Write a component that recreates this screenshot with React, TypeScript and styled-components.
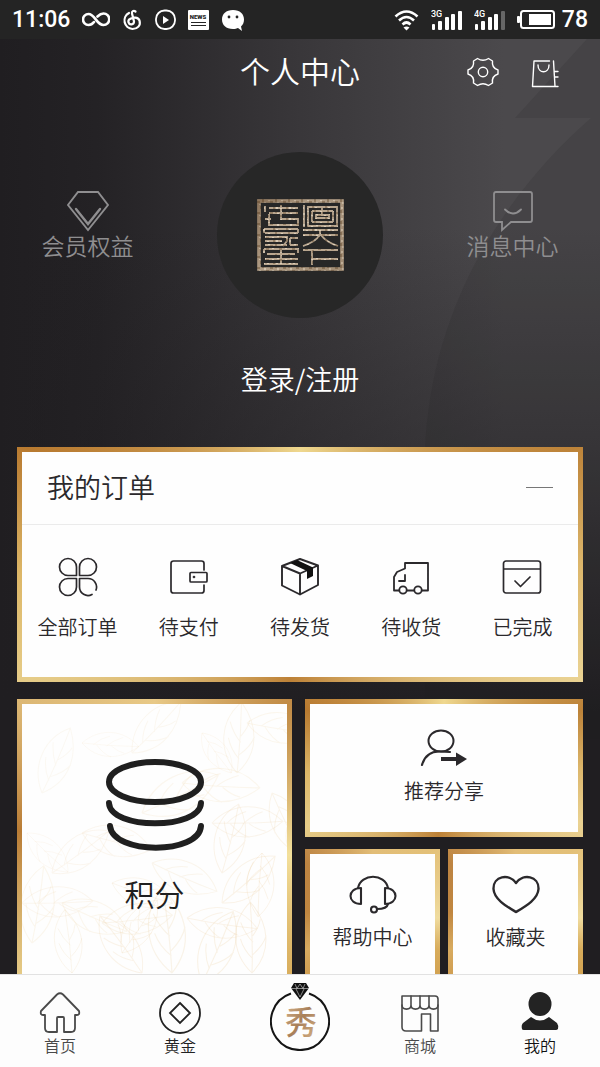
import React from "react";
import styled, { createGlobalStyle } from "styled-components";

const ink = "#2b292c";
const cjk = `"Noto Sans CJK SC", "Noto Sans", sans-serif`;

const GlobalStyle = createGlobalStyle`
  *, *::before, *::after { box-sizing: border-box; }
  body { margin: 0; background: #201e21; font-family: ${cjk}; font-weight: 350; }
  svg { display: block; flex: none; }
  button { font: inherit; color: inherit; background: none; border: 0; padding: 0; margin: 0; cursor: pointer; }
  a { color: inherit; text-decoration: none; }
`;

const Screen = styled.div`
  display: flex;
  flex-direction: column;
  height: 100vh;
`;

const StatusBar = styled.div`
  display: flex;
  align-items: center;
  flex: none;
  height: 39px;
  padding: 0 12px;
  background: #242424;
  color: #fff;
  font: 500 23px/36px Roboto, sans-serif;
`;

const StatusGroup = styled.div<{ $gap: number; $push?: boolean }>`
  display: flex;
  align-items: center;
  gap: ${(p) => p.$gap}px;
  margin-left: ${(p) => (p.$push ? "auto" : "0")};
`;

const Content = styled.main`
  position: relative;
  flex: 1;
  min-height: 0;
  overflow-y: auto;
  scrollbar-width: none;
  background:
    linear-gradient(180deg, rgba(32, 30, 33, 0) 20%, rgba(32, 30, 33, 0.4) 44%, #201e21 72%),
    linear-gradient(90deg, #201e21 0%, #242225 16%, #39373a 50%, #4b494c 84%, #4b494c 100%);
`;

const Backdrop = styled.svg`
  position: absolute;
  top: 0;
  right: 0;
`;

const Page = styled.div`
  position: relative;
`;

const Header = styled.header`
  display: grid;
  grid-template-columns: 1fr auto 1fr;
  align-items: center;
  height: 66px;
  padding: 0 41px;
  color: #fff;
`;

const Title = styled.h1`
  grid-column: 2;
  margin: 0;
  padding-bottom: 4px;
  font-size: 30px;
  line-height: 44px;
  font-weight: 350;
`;

const Actions = styled.div`
  display: flex;
  justify-content: flex-end;
  align-items: center;
  gap: 32px;
`;

const Hero = styled.section`
  display: grid;
  grid-template-columns: 7fr 10fr 7fr;
  align-items: center;
  justify-items: center;
  padding-top: 47px;
`;

const SideLink = styled.a`
  display: flex;
  flex-direction: column;
  align-items: center;
  padding-bottom: 22px;
  color: #8f8e90;
  font-size: 23px;
  line-height: 26px;
`;

const Avatar = styled.button`
  display: flex;
  align-items: center;
  justify-content: center;
  width: 166px;
  height: 166px;
  border-radius: 50%;
  background: #272727;
`;

const Login = styled.a`
  display: block;
  width: max-content;
  margin: 41px auto 48px;
  color: #fff;
  font-size: 27px;
  line-height: 40px;
`;

const Sections = styled.div`
  display: grid;
  gap: 17px;
  padding: 0 17px 16px;
  color: ${ink};
`;

const frames = {
  wide: "#efd88f 0deg, #bd8339 67deg, #dcb66b 90deg, #ead292 112deg, #bd8137 185deg, #e6cc88 247deg, #ddb768 268deg, #b87a30 293deg, #efd88f 360deg",
  tall: "#e8c987 0deg, #c18b46 44deg, #f3e09c 95deg, #d8ac5b 136deg, #bd8137 180deg, #e6cc88 224deg, #b97c35 275deg, #dcb774 316deg, #e8c987 360deg",
  small: "#e2bd77 0deg, #e3c078 40deg, #f0dc9f 90deg, #d8ac5b 116deg, #bd7f30 190deg, #d8ab60 244deg, #c08640 275deg, #bd8442 310deg, #e2bd77 360deg",
};

const Card = styled.section<{ $frame: keyof typeof frames }>`
  border: 5px solid #d6ab60;
  border-image: conic-gradient(${(p) => frames[p.$frame]}) 5;
  background: #fefefe;
`;

const OrderHead = styled.div`
  display: flex;
  align-items: center;
  justify-content: space-between;
  height: 73px;
  padding: 0 25px 2px;
  border-bottom: 1px solid #ebebeb;
`;

const OrderTitle = styled.h2`
  margin: 0;
  font-size: 27px;
  line-height: 40px;
  font-weight: 350;
`;

const Dash = styled.button`
  display: flex;
  align-items: center;
  width: 27px;
  height: 32px;

  &::before {
    content: "";
    width: 100%;
    height: 1px;
    background: #777;
  }
`;

const OrderList = styled.div`
  display: grid;
  grid-template-columns: repeat(5, 1fr);
  padding: 32px 0 35px;
`;

const OrderLink = styled.a`
  display: flex;
  flex-direction: column;
  align-items: center;
  gap: 15px;
  font-size: 20px;
  line-height: 30px;
`;

const Tiles = styled.div`
  display: grid;
  grid-template-columns: 275fr 278fr;
  gap: 13px;
`;

const TileColumn = styled.div`
  display: grid;
  gap: 12px;
`;

const TilePair = styled.div`
  display: grid;
  grid-template-columns: 1fr 1fr;
  gap: 8px;
`;

const TileLink = styled.a`
  display: flex;
  flex-direction: column;
  align-items: center;
  gap: 8px;
  padding: 24px 0 26px;
  font-size: 20px;
  line-height: 30px;
`;

const SmallTileLink = styled(TileLink)`
  padding: 20px 0 30px;
`;

const PointsLink = styled.a`
  position: relative;
  display: flex;
  flex-direction: column;
  align-items: center;
  gap: 19px;
  height: 100%;
  padding-top: 54px;
  overflow: hidden;
  color: #1f1f1f;
  font-size: 30px;
  line-height: 44px;

  > * { position: relative; }
`;

const Leaves = styled.svg`
  && {
    position: absolute;
    inset: 0;
    width: 100%;
    height: 100%;
  }
`;

const TabBar = styled.nav`
  display: grid;
  grid-template-columns: repeat(5, 1fr);
  flex: none;
  padding: 8px 0 11px;
  border-top: 1px solid #e2e2e2;
  background: #fdfdfd;
`;

const Tab = styled.a<{ $tone: string }>`
  display: flex;
  flex-direction: column;
  align-items: center;
  padding-top: 9px;
  color: ${(p) => p.$tone};
  font-size: 16px;
  line-height: 22px;
`;

const ShowTab = styled.a`
  display: flex;
  justify-content: center;
  height: 68px;
`;

type IconProps = {
  w: number;
  h: number;
  sw?: number;
  children: React.ReactNode;
};

const Icon = ({ w, h, sw = 2, children }: IconProps) => (
  <svg
    width={w}
    height={h}
    viewBox={`0 0 ${w} ${h}`}
    fill="none"
    stroke="currentColor"
    strokeWidth={sw}
    strokeLinecap="round"
    strokeLinejoin="round"
    aria-hidden="true"
  >
    {children}
  </svg>
);

const Signal = ({ label, weak }: { label: string; weak?: boolean }) => (
  <svg width="31" height="22" viewBox="0 0 31 22" fill="#fff" aria-hidden="true">
    <text x="0" y="8" fontSize="9" fontFamily="Roboto, sans-serif" fontWeight="500">{label}</text>
    <rect x="1" y="15" width="3" height="6" rx="1" />
    <rect x="7" y="12" width="4" height="9" rx="1" />
    <rect x="14" y="8" width="4" height="13" rx="1" />
    <rect x="20" y="5" width="4" height="16" rx="1" />
    <rect x="27" y="2" width="4" height="19" rx="1" opacity={weak ? 0.3 : 1} />
  </svg>
);

const Seal = () => (
  <svg width="87" height="72" viewBox="0 0 87 72" fill="none" stroke="url(#foil)" strokeWidth="1.8" role="img" aria-label="阖天下传家宝">
    <defs>
      <pattern id="foil" width="13" height="11" patternUnits="userSpaceOnUse">
        <rect width="13" height="11" fill="#b9a68f" />
        <path d="M0 2h3v2H0zM5 0h2v3H5zM9 5h3v2H9zM3 7h2v3H3z" fill="#968066" />
        <path d="M2 5h2v1H2zM7 3h2v2H7zM10 9h2v1h-2zM6 8h2v2H6zM11 1h2v1h-2z" fill="#dccdb8" />
      </pattern>
      <linearGradient id="rust" x1="0" y1="0" x2="1" y2="0.6">
        <stop offset="0" stopColor="#4a2c10" stopOpacity="0.4" />
        <stop offset="0.5" stopColor="#4a2c10" stopOpacity="0.05" />
        <stop offset="1" stopColor="#4a2c10" stopOpacity="0.2" />
      </linearGradient>
    </defs>
    <rect x="2" y="2" width="83" height="68" strokeWidth="3.6" />
    <rect x="2" y="2" width="83" height="68" strokeWidth="3.6" stroke="url(#rust)" />
    <path d="M8 7v6M12 15v11H41V20H24V6M12 9h29M12 14h29M8 20h6" />
    <path d="M7 30h34M7 30v4M41 30v4M8 34h33M8 38h22M8 42h17M8 46h22M30 37v5l-4 5M33 39h8M33 46h8M33 39v7" />
    <path d="M7 50h34v4M7 50v4M10 55h28M8 60h33M24 50v15M7 65h34" />
    <path d="M47 6v22M51 8h29v19H51zM55 12h21M55 23h21M55 12v11M76 12v11M59 16h13v3H59zM65 8v8" />
    <path d="M46 31h35M46 36h35M63 30v6q-5 7-17 11M64 36q5 7 17 11" />
    <path d="M46 51h35M55 51v15M55 60h26" />
  </svg>
);

const leaf = "M0 0C14-26 44-34 68-20C52 4 26 14 0 0M0 0Q34-8 68-20M14-3Q20-14 30-20M30-7Q36-17 46-24M18-4Q30 4 40 4M36-9Q46-5 54-6";

const leafPositions: Array<[number, number, number, number]> = [
  [20, 90, -50, 1], [60, 40, 20, 0.8], [110, 50, -30, 1], [180, 30, 70, 0.7], [215, 70, -70, 1],
  [250, 90, 80, 1], [30, 170, -20, 1], [90, 180, 35, 0.9], [190, 120, 15, 1], [240, 150, 110, 0.9],
  [10, 240, -65, 1.1], [50, 270, -80, 0.9], [80, 220, 10, 1], [130, 160, 40, 1], [150, 270, -80, 1.2],
  [180, 280, -50, 1.1], [200, 200, -25, 1], [230, 270, -75, 1], [120, 270, -110, 1], [225, 20, 25, 1],
  [165, 215, 25, 1], [5, 130, 60, 0.8], [60, 130, 30, 1], [120, 110, -10, 1.2], [160, 80, 20, 1.1],
  [200, 170, -60, 1], [40, 200, 40, 1], [100, 250, -40, 0.9], [0, 200, 15, 1],
];

const App = () => (
  <Screen>
    <GlobalStyle />
    <StatusBar>
      <StatusGroup $gap={12}>
        <span>11:06</span>
        <Icon w={28} h={20} sw={2.6}>
          <path d="M15.500 6.500c2-2 4-3 6-3a5.500 5.500 0 0 1 0 11.500c-7 0-8.500-11-15-11a5.300 5.300 0 0 0 0 11c2.500 0 4-1 5.500-3" />
        </Icon>
        <Icon w={21} h={22} sw={2.2}>
          <path d="M13.500 2.500c-2-1.500-4 0-3.500 2l2 8a2.800 2.800 0 1 1-4-2.500c3-2 8-2 9.500 1.500 1.500 5-2 8.500-7 8.500a8.500 8.500 0 0 1-3.500-16" />
        </Icon>
        <Icon w={21} h={22} sw={1.8}>
          <rect x="1" y="1.500" width="19" height="18.500" rx="8.500" />
          <path d="M8 7v8l6-4z" fill="currentColor" stroke="none" />
        </Icon>
        <svg width="21" height="22" viewBox="0 0 21 22" aria-hidden="true">
          <rect y="1" width="21" height="20" rx="1" fill="#fff" />
          <text x="10" y="10" textAnchor="middle" fontSize="6" fontWeight="900" fontFamily="Roboto, sans-serif" fill="#242424">NEWS</text>
          <path d="M3 13.500h15M3 16.500h15" stroke="#242424" />
        </svg>
        <svg width="24" height="22" viewBox="0 0 24 22" aria-hidden="true">
          <path d="M12 1C5 1 1 5 1 10.500S5 20 12 20c2 0 4-.5 5-1l4 3-1-4.500c2-2 3-4 3-7C23 5 19 1 12 1z" fill="#fff" />
          <circle cx="8" cy="8" r="1.400" fill="#242424" />
          <circle cx="16" cy="8" r="1.400" fill="#242424" />
        </svg>
      </StatusGroup>
      <StatusGroup $gap={12} $push>
        <Icon w={25} h={22} sw={2.6}>
          <path d="M1.500 7.500q11-10 22 0M5 11.500q7.500-7 15 0M8.500 15.500q4-4 8 0" strokeLinecap="butt" />
          <path d="M12.500 21.500l-3-3q3-2 6 0z" fill="currentColor" stroke="none" />
        </Icon>
        <Signal label="3G" />
        <Signal label="4G" weak />
        <StatusGroup $gap={6}>
          <svg width="39" height="22" viewBox="0 0 39 22" aria-hidden="true">
            <rect x="4" y="2" width="33" height="17" rx="2.500" fill="none" stroke="#fff" strokeWidth="2" />
            <rect x="0" y="7" width="3" height="7" rx="1" fill="#fff" />
            <rect x="12" y="5" width="22" height="11" fill="#fff" />
          </svg>
          <span>78</span>
        </StatusGroup>
      </StatusGroup>
    </StatusBar>

    <Content>
      <Backdrop width="180" height="700" viewBox="0 0 180 700" aria-hidden="true">
        <path d="M167 0L95 79H171C90 150 12 260 5 410V700H180V0z" fill="#201e21" opacity="0.13" />
      </Backdrop>
      <Page>
        <Header>
          <Title>个人中心</Title>
          <Actions>
            <button aria-label="设置">
              <Icon w={32} h={30} sw={1.4}>
                <circle cx="16" cy="15" r="4.700" />
                <path d="M10.500 1.500Q16 5 21.500 1.500L25.500 4Q24.500 11 31 13V17Q24.500 19 25.500 26L21.500 28.500Q16 25 10.500 28.500L6.500 26Q7.500 19 1 17V13Q7.500 11 6.500 4Z" />
              </Icon>
            </button>
            <button aria-label="购物袋">
              <Icon w={28} h={32} sw={1.4}>
                <path d="M18.500 5H3L1.500 30.500H27M22.500 5L24 30.500M24 15.500h3M24 21h3" />
                <path d="M7 9c0 9 11 9 11 0" />
              </Icon>
            </button>
          </Actions>
        </Header>

        <Hero>
          <SideLink href="#benefits">
            <Icon w={42} h={42} sw={1.9}>
              <path d="M11 2H31L41 15L21 40L1 15Z" strokeLinejoin="miter" />
              <path d="M9 19L21 34L33 19" strokeWidth="2.400" strokeLinejoin="miter" />
            </Icon>
            会员权益
          </SideLink>
          <Avatar aria-label="头像">
            <Seal />
          </Avatar>
          <SideLink href="#messages">
            <Icon w={40} h={42} sw={1.8}>
              <path d="M3 2H37Q39 2 39 4V30Q39 32 37 32H18L9 40V32H3Q1 32 1 30V4Q1 2 3 2Z" strokeLinejoin="miter" />
              <path d="M12 19.500q8 8 16 0" />
            </Icon>
            消息中心
          </SideLink>
        </Hero>
        <Login href="#login">登录/注册</Login>

        <Sections>
          <Card $frame="wide">
            <OrderHead>
              <OrderTitle>我的订单</OrderTitle>
              <Dash aria-label="收起" />
            </OrderHead>
            <OrderList>
              <OrderLink href="#all">
                <Icon w={40} h={40} sw={1.7}>
                  <path d="M18.500 18.500H10a8.500 8.500 0 1 1 8.500-8.500z" />
                  <path d="M21.500 18.500V10a8.500 8.500 0 1 1 8.500 8.500z" />
                  <path d="M18.500 21.500V30a8.500 8.500 0 1 1-8.500-8.500z" />
                  <path d="M38 33a8.500 8.500 0 0 0-8-11.500H21.500V30a8.500 8.500 0 0 0 12.500 7.500" />
                </Icon>
                全部订单
              </OrderLink>
              <OrderLink href="#unpaid">
                <Icon w={38} h={40} sw={1.7}>
                  <path d="M34 13V6.500Q34 4 31.500 4H3.500Q1 4 1 6.500V33.500Q1 36 3.500 36H31.500Q34 36 34 33.500V28" />
                  <rect x="20" y="15.500" width="17" height="9.500" rx="1" />
                  <circle cx="24" cy="20" r="0.500" />
                </Icon>
                待支付
              </OrderLink>
              <OrderLink href="#unshipped">
                <Icon w={38} h={40} sw={1.9}>
                  <path d="M1 9L19 2L37 8.500V28L19 37.500L1 28.500ZM1 9L19 16.500L37 8.500M19 16.500V37.500" />
                  <path d="M9 6L16 3L32 10.500V19L26 22V14Z" fill="#111" stroke="none" />
                </Icon>
                待发货
              </OrderLink>
              <OrderLink href="#shipping">
                <Icon w={38} h={40} sw={1.8}>
                  <path d="M7 33.500H2V20L5 15L13 11.500V6H36V33.500H30M22 33.500H15" />
                  <path d="M13 18V24H7" />
                  <circle cx="11" cy="33" r="3.700" />
                  <circle cx="26" cy="33" r="3.700" />
                </Icon>
                待收货
              </OrderLink>
              <OrderLink href="#done">
                <Icon w={40} h={40} sw={1.7}>
                  <rect x="1.500" y="4" width="37" height="32" rx="2.500" />
                  <path d="M2 12H38M13 24L18.500 29.500L28 20" />
                </Icon>
                已完成
              </OrderLink>
            </OrderList>
          </Card>

          <Tiles>
            <Card $frame="tall">
              <PointsLink href="#points">
                <Leaves viewBox="0 0 265 280" preserveAspectRatio="xMidYMid slice" fill="none" stroke="#e9c995" strokeWidth="1" aria-hidden="true">
                  {leafPositions.map(([x, y, angle, size], i) => (
                    <path
                      key={i}
                      d={leaf}
                      opacity={0.08 + (x + y) / 3200}
                      transform={`translate(${x} ${y}) rotate(${angle}) scale(${size})`}
                    />
                  ))}
                </Leaves>
                <Icon w={100} h={94} sw={6}>
                  <ellipse cx="50" cy="24" rx="46" ry="20" />
                  <path d="M4 45C5 72 95 72 96 45M5 68C8 97 94 97 96 68" />
                </Icon>
                <span>积分</span>
              </PointsLink>
            </Card>
            <TileColumn>
              <Card $frame="wide">
                <TileLink href="#share">
                  <Icon w={48} h={40} sw={2}>
                    <ellipse cx="21" cy="13" rx="12.500" ry="10.500" />
                    <path d="M2 37Q6 23 20 23.500L30 24" strokeWidth="2.200" />
                    <path d="M21 31H37" strokeWidth="4" strokeLinecap="butt" />
                    <path d="M36 24.500L47 31L36 38Z" fill="currentColor" stroke="none" />
                  </Icon>
                  推荐分享
                </TileLink>
              </Card>
              <TilePair>
                <Card $frame="small">
                  <SmallTileLink href="#help">
                    <Icon w={48} h={40} sw={2.1}>
                      <path d="M9 14C12-1 36-1 39 14" />
                      <path d="M12 14V30C-2 30-2 14 12 14ZM36 14V30C50 30 50 14 36 14Z" />
                      <path d="M39 30Q38 35 28 35" />
                      <circle cx="25" cy="35.500" r="3" />
                    </Icon>
                    帮助中心
                  </SmallTileLink>
                </Card>
                <Card $frame="small">
                  <SmallTileLink href="#favorites">
                    <Icon w={48} h={40} sw={2.4}>
                      <path d="M24 9C17-1 1 2 1.500 15C2 25 14 32 24 38C34 32 46 25 46.500 15C47 2 31-1 24 9Z" />
                    </Icon>
                    收藏夹
                  </SmallTileLink>
                </Card>
              </TilePair>
            </TileColumn>
          </Tiles>
        </Sections>
      </Page>
    </Content>

    <TabBar>
      <Tab href="#home" $tone="#4a4a4a">
        <Icon w={42} h={42} sw={1.8}>
          <path d="M18 2.500Q21 0 24 2.500L40 19Q41 23 38 23H36V36Q36 40 32 40H25V26Q25 25 24 25H19Q18 25 18 26V40H10Q6 40 6 36V23H4Q1 23 2 19Z" />
        </Icon>
        首页
      </Tab>
      <Tab href="#gold" $tone="#222">
        <Icon w={42} h={42} sw={1.8}>
          <circle cx="21" cy="21" r="20" />
          <path d="M21 11L31 21L21 31L11 21Z" strokeLinejoin="miter" />
        </Icon>
        黄金
      </Tab>
      <ShowTab href="#show" aria-label="秀">
        <svg width="60" height="68" viewBox="0 0 60 68">
          <defs>
            <linearGradient id="gold" x1="0" y1="0" x2="1" y2="1">
              <stop offset="0" stopColor="#dcbb91" />
              <stop offset="0.5" stopColor="#a87f59" />
              <stop offset="1" stopColor="#dcb98d" />
            </linearGradient>
          </defs>
          <path d="M21 10.500A29 29 0 1 0 39 10.500" fill="none" stroke="#151515" strokeWidth="2" />
          <path d="M24 0H36L39 5L30 17L21 5Z" fill="#111" />
          <path d="M21 5.500H39M25 1L27 5.500L30 1L33 5.500L35 1M26 6L30 14L34 6" fill="none" stroke="#fff" strokeWidth="0.500" />
          <text x="31" y="51" textAnchor="middle" fontSize="32" fontWeight="500" fontFamily={cjk} fill="url(#gold)">秀</text>
        </svg>
      </ShowTab>
      <Tab href="#mall" $tone="#4a4a4a">
        <Icon w={38} h={42} sw={1.6}>
          <path d="M1 4H34Q37 4 37 7V39H29.500V22H20.500V39H5Q1 39 1 35Z" />
          <path d="M1 13C1 18.500 10 18.500 10 13C10 18.500 19 18.500 19 13C19 18.500 28 18.500 28 13C28 18.500 37 18.500 37 13M10 4V13M19 4V13M28 4V13" />
        </Icon>
        商城
      </Tab>
      <Tab href="#mine" $tone="#111" aria-current="page">
        <svg width="38" height="42" viewBox="0 0 38 42" fill="#232323" aria-hidden="true">
          <ellipse cx="19" cy="12" rx="11.500" ry="12" />
          <path d="M10 25Q19 32 28 25L36 31Q38 34 37 37Q36 38 35 38H3Q1 38 1 37Q0 33 2 31Z" />
        </svg>
        我的
      </Tab>
    </TabBar>
  </Screen>
);

export default App;
